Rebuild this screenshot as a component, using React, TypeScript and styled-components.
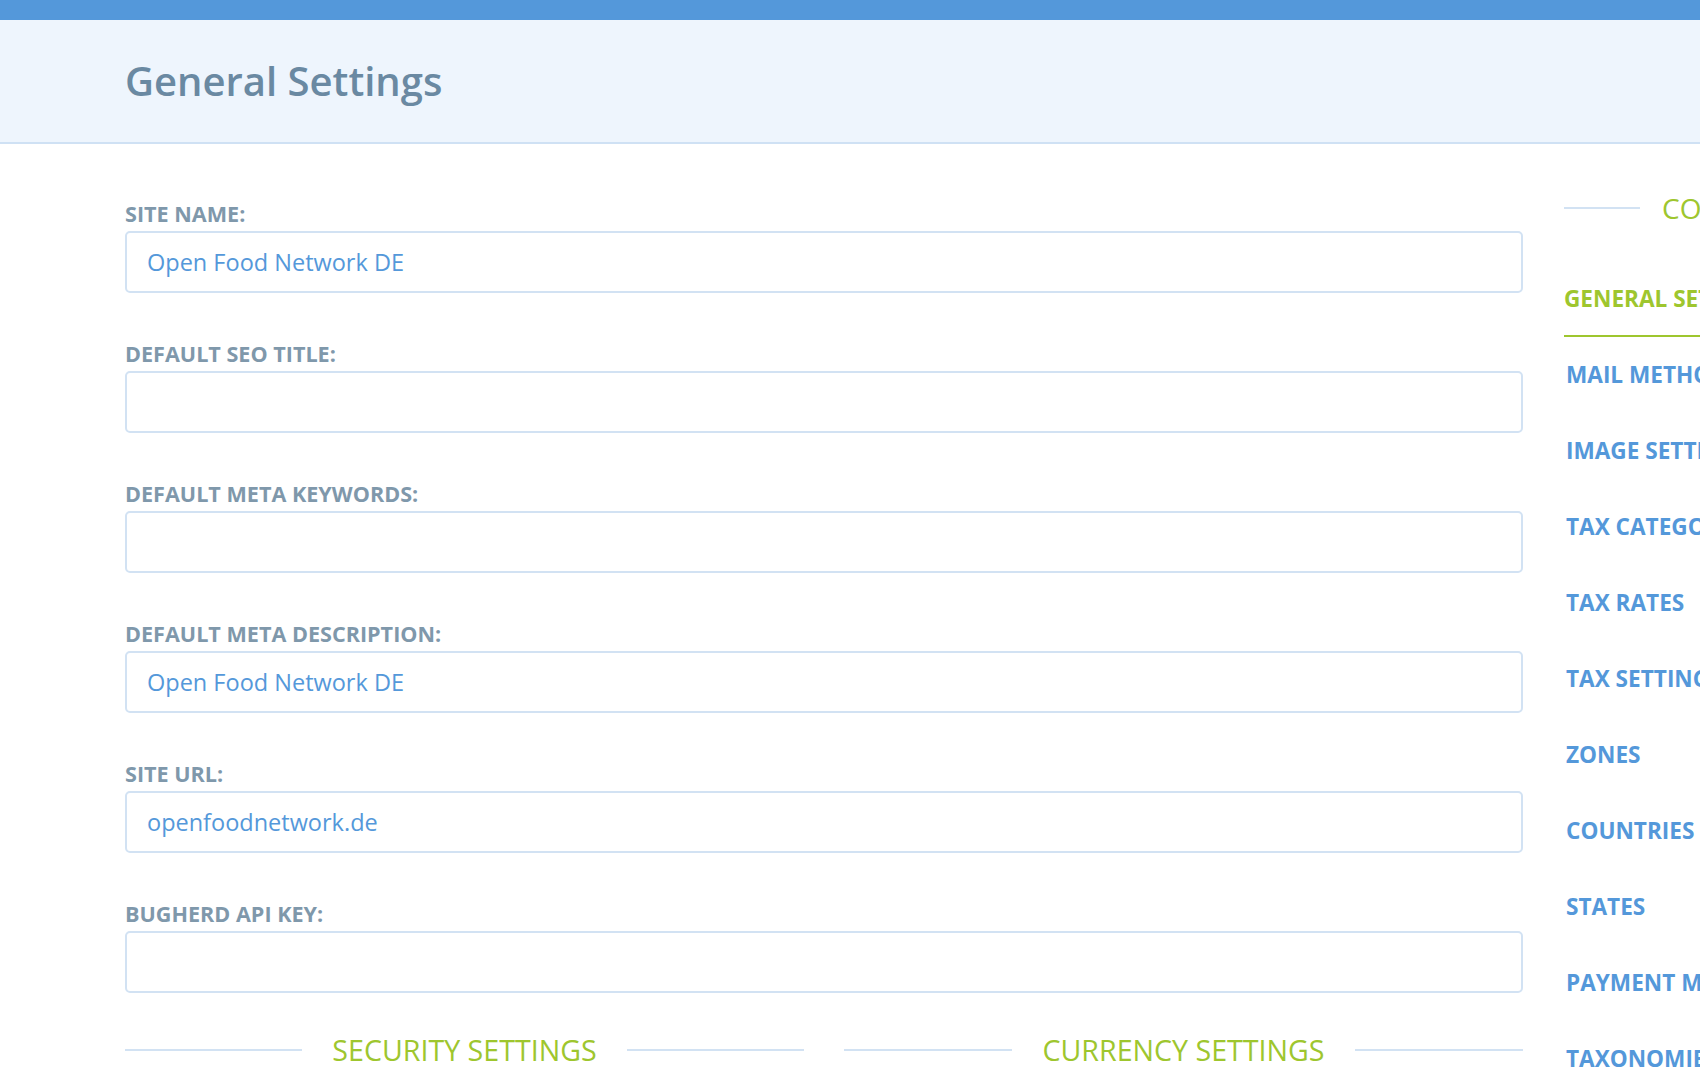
import React from 'react'
import styled, { createGlobalStyle } from 'styled-components'

const Global = createGlobalStyle`
  html, body {
    margin: 0;
    padding: 0;
    background: #fff;
    font-family: 'Open Sans', 'Noto Sans', 'Liberation Sans', sans-serif;
  }
  body {
    overflow: hidden;
  }
`

const fields = [
  { label: 'Site Name:', value: 'Open Food Network DE' },
  { label: 'Default SEO Title:', value: '' },
  { label: 'Default Meta Keywords:', value: '' },
  { label: 'Default Meta Description:', value: 'Open Food Network DE' },
  { label: 'Site URL:', value: 'openfoodnetwork.de' },
  { label: 'Bugherd API Key:', value: '' },
]

const navItems = [
  'General Settings',
  'Mail Methods',
  'Image Settings',
  'Tax Categories',
  'Tax Rates',
  'Tax Settings',
  'Zones',
  'Countries',
  'States',
  'Payment Methods',
  'Taxonomies',
]

export default function App() {
  return (
    <Page>
      <Global />
      <TopBar />
      <Header>
        <Title>General Settings</Title>
      </Header>
      <Body>
        <Main>
          <Fields>
            {fields.map((f) => (
              <Field key={f.label}>
                <Label>{f.label}</Label>
                <Input type="text" defaultValue={f.value} />
              </Field>
            ))}
          </Fields>
          <Sections>
            <SectionTitle>
              <Rule />
              <span>Security Settings</span>
              <Rule />
            </SectionTitle>
            <SectionTitle>
              <Rule />
              <span>Currency Settings</span>
              <Rule />
            </SectionTitle>
          </Sections>
        </Main>
        <Sidebar>
          <SideHeading>
            <SideRule />
            <span>Configurations</span>
            <SideRule />
          </SideHeading>
          <Nav>
            {navItems.map((item, i) => (
              <NavItem key={item} $active={i === 0}>
                {item}
              </NavItem>
            ))}
          </Nav>
        </Sidebar>
      </Body>
    </Page>
  )
}

const Page = styled.div`
  width: 100%;
  min-height: 1080px;
  overflow: hidden;
`
const TopBar = styled.div`
  height: 20px;
  background-color: #5498da;
`
const Header = styled.header`
  box-sizing: border-box;
  display: flex;
  align-items: center;
  height: 124px;
  padding: 0 0 0 125px;
  background-color: #eef5fd;
  border-bottom: 2px solid #cfe1f4;
`
const Title = styled.h1`
  margin: 0;
  font-size: 40px;
  font-weight: 600;
  line-height: 48px;
  color: #6a89a2;
`
const Body = styled.div`
  display: flex;
  gap: 41px;
  padding-left: 125px;
`
const Main = styled.main`
  flex: 0 0 1398px;
  padding-top: 57px;
`
const Fields = styled.div`
  display: flex;
  flex-direction: column;
  gap: 48px;
`
const Field = styled.div`
  display: flex;
  flex-direction: column;
  gap: 4px;
`
const Label = styled.label`
  font-size: 21.6px;
  font-weight: 700;
  line-height: 26px;
  text-transform: uppercase;
  color: #7f98ab;
`
const Input = styled.input`
  box-sizing: border-box;
  width: 100%;
  height: 62px;
  padding: 0 20px;
  border: 2px solid #d2e2f3;
  border-radius: 5px;
  background: #fff;
  font-family: 'Open Sans', 'Noto Sans', sans-serif;
  font-size: 23.5px;
  color: #5498da;
  outline: none;
`
const Sections = styled.div`
  display: grid;
  grid-template-columns: 1fr 1fr;
  gap: 40px;
  margin-top: 41px;
`
const SectionTitle = styled.h2`
  display: flex;
  align-items: center;
  gap: 30px;
  margin: 0;
  font-size: 28.6px;
  font-weight: 400;
  line-height: 32px;
  text-transform: uppercase;
  color: #9ec62e;
  white-space: nowrap;
`
const Rule = styled.div`
  flex: 1 1 auto;
  height: 2px;
  background-color: #d2e2f3;
`
const Sidebar = styled.aside`
  flex: 0 0 420px;
  padding-top: 48px;
`
const SideHeading = styled.h3`
  display: flex;
  align-items: center;
  gap: 22px;
  margin: 0 0 37px;
  font-size: 28px;
  font-weight: 400;
  line-height: 32px;
  text-transform: uppercase;
  color: #9ec62e;
  white-space: nowrap;
`
const SideRule = styled.div`
  flex: 0 0 76px;
  height: 2px;
  background-color: #d2e2f3;
`
const Nav = styled.nav`
  display: flex;
  flex-direction: column;
`
const NavItem = styled.a<{ $active?: boolean }>`
  display: block;
  padding: 25px 0 23px;
  padding-left: ${(p) => (p.$active ? '0' : '2px')};
  font-size: 22.6px;
  font-weight: 700;
  line-height: 26px;
  text-transform: uppercase;
  white-space: nowrap;
  color: ${(p) => (p.$active ? '#9ec62e' : '#5498da')};
  border-bottom: 2px solid ${(p) => (p.$active ? '#9ec62e' : 'transparent')};
  cursor: pointer;
`
